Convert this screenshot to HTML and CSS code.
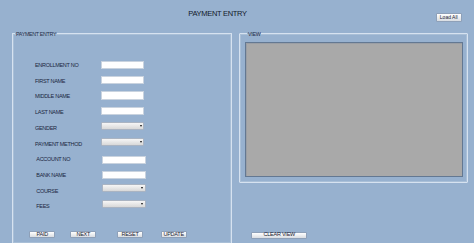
FILE: index.html
```html
<!DOCTYPE html>
<html>
<head>
<meta charset="utf-8">
<link rel="stylesheet" href="styles.css">
</head>
<body>
<header class="top">
  <h1 class="title">PAYMENT ENTRY</h1>
  <button class="btn load">Load All</button>
</header>
<main class="main">
  <fieldset class="panel entry">
    <legend>PAYMENT ENTRY</legend>
    <div class="form">
      <div class="row"><label>ENROLLMENT NO</label><input class="txt t1" type="text"></div>
      <div class="row"><label>FIRST NAME</label><input class="txt t2" type="text"></div>
      <div class="row"><label>MIDDLE NAME</label><input class="txt t3" type="text"></div>
      <div class="row"><label>LAST NAME</label><input class="txt t4" type="text"></div>
      <div class="row"><label>GENDER</label><div class="combo c1"><span class="arrow"></span></div></div>
      <div class="row"><label>PAYMENT METHOD</label><div class="combo c1"><span class="arrow"></span></div></div>
      <div class="group-b">
        <div class="row"><label>ACCOUNT NO</label><input class="txt t5" type="text"></div>
        <div class="row"><label>BANK NAME</label><input class="txt t6" type="text"></div>
        <div class="row"><label>COURSE</label><div class="combo c2"><span class="arrow"></span></div></div>
        <div class="row"><label>FEES</label><div class="combo c2"><span class="arrow"></span></div></div>
      </div>
    </div>
    <div class="actions">
      <button class="btn act paid">PAID</button>
      <button class="btn act next">NEXT</button>
      <button class="btn act reset">RESET</button>
      <button class="btn act update">UPDATE</button>
    </div>
  </fieldset>
  <div class="right">
    <fieldset class="panel view">
      <legend>VIEW</legend>
      <div class="screen"></div>
    </fieldset>
    <button class="btn clear">CLEAR VIEW</button>
  </div>
</main>
</body>
</html>
```

FILE: styles.css
```css
* { box-sizing: border-box; }
html, body {
  margin: 0;
  padding: 0;
  width: 474px;
  height: 243px;
  overflow: hidden;
  background: #97b1cf;
  font-family: "Liberation Sans", Arial, sans-serif;
}
.top {
  display: flex;
  align-items: flex-start;
  height: 30.5px;
  padding-top: 9.6px;
}
.title {
  margin: 0 0 0 188.3px;
  font-size: 7.5px;
  line-height: 8px;
  letter-spacing: -0.3px;
  font-weight: normal;
  color: #121a2a;
}
.btn {
  margin: 0;
  padding: 0;
  font-family: "Liberation Sans", Arial, sans-serif;
  font-size: 5.5px;
  letter-spacing: -0.25px;
  color: #1a2234;
  background: linear-gradient(#ffffff, #d9dde2);
  border: 1px solid #8ea0b8;
  border-radius: 1px;
  display: flex;
  align-items: center;
  justify-content: center;
  line-height: 1;
}
.load {
  margin-left: auto;
  margin-right: 12.5px;
  margin-top: 3.7px;
  width: 25.5px;
  height: 8.7px;
  font-size: 5px;
  letter-spacing: 0;
}
.main {
  display: flex;
  align-items: flex-start;
  padding-left: 12px;
  gap: 7px;
}
.panel {
  margin: 0;
  padding: 0;
  border: 1px solid #d6e2f0;
  box-shadow: inset 0 0 0 1px rgba(255,255,255,0.18);
  border-radius: 1px;
  min-width: 0;
}
.panel legend {
  margin-left: 2px;
  padding: 0 1px;
  font-size: 5.3px;
  line-height: 6px;
  letter-spacing: -0.3px;
  color: #1e2a44;
}
.entry {
  width: 220px;
  height: 212.5px;
  border-bottom-width: 0;
  border-bottom-left-radius: 0;
  border-bottom-right-radius: 0;
}
.form {
  padding-top: 21.6px;
  padding-left: 22px;
}
.row {
  display: flex;
  align-items: flex-start;
  height: 15.7px;
}
.row label {
  width: 66px;
  flex: none;
  font-size: 5.5px;
  line-height: 15.7px;
  letter-spacing: -0.3px;
  color: #1b2640;
}
.group-b { margin-left: 1.3px; }
.txt {
  margin: 0;
  padding: 0;
  width: 43.3px;
  height: 8.5px;
  background: #ffffff;
  border: 1px solid #c9d3df;
  border-radius: 0;
}
.t1 { margin-top: 2.85px; }
.t2 { margin-top: 2.15px; }
.t3 { margin-top: 1.75px; }
.t4 { margin-top: 1.45px; }
.t5 { margin-top: 3.6px; }
.t6 { margin-top: 3px; }
.combo {
  width: 43.3px;
  height: 8.3px;
  background: linear-gradient(#f6f6f6, #d8d8d8);
  border: 1px solid #aab4c2;
  border-radius: 1px;
  display: flex;
  align-items: center;
  justify-content: flex-end;
  padding-right: 1.8px;
}
.c1 { margin-top: 1.05px; }
.c2 { margin-top: 0.55px; }
.arrow {
  width: 0;
  height: 0;
  border-left: 1.2px solid transparent;
  border-right: 1.2px solid transparent;
  border-top: 2px solid #111;
}
.actions {
  display: flex;
  margin-top: 16.5px;
  padding-left: 16.3px;
}
.act {
  width: 26px;
  height: 7px;
}
.next { margin-left: 15px; }
.reset { margin-left: 20.7px; }
.update { margin-left: 17.7px; }
.right {
  display: flex;
  flex-direction: column;
}
.view {
  width: 228.5px;
  height: 152.5px;
  padding: 5.2px 3.8px 0 5px;
}
.screen {
  width: 217.7px;
  height: 135.3px;
  background: #a9a9a9;
  border: 1px solid #637892;
  border-right-width: 1.5px;
  border-bottom-width: 1.5px;
  box-shadow: inset 1px 1px 0 #9a9ea4;
}
.clear {
  margin-top: 48.7px;
  margin-left: 12.3px;
  width: 56px;
  height: 7px;
}
```
